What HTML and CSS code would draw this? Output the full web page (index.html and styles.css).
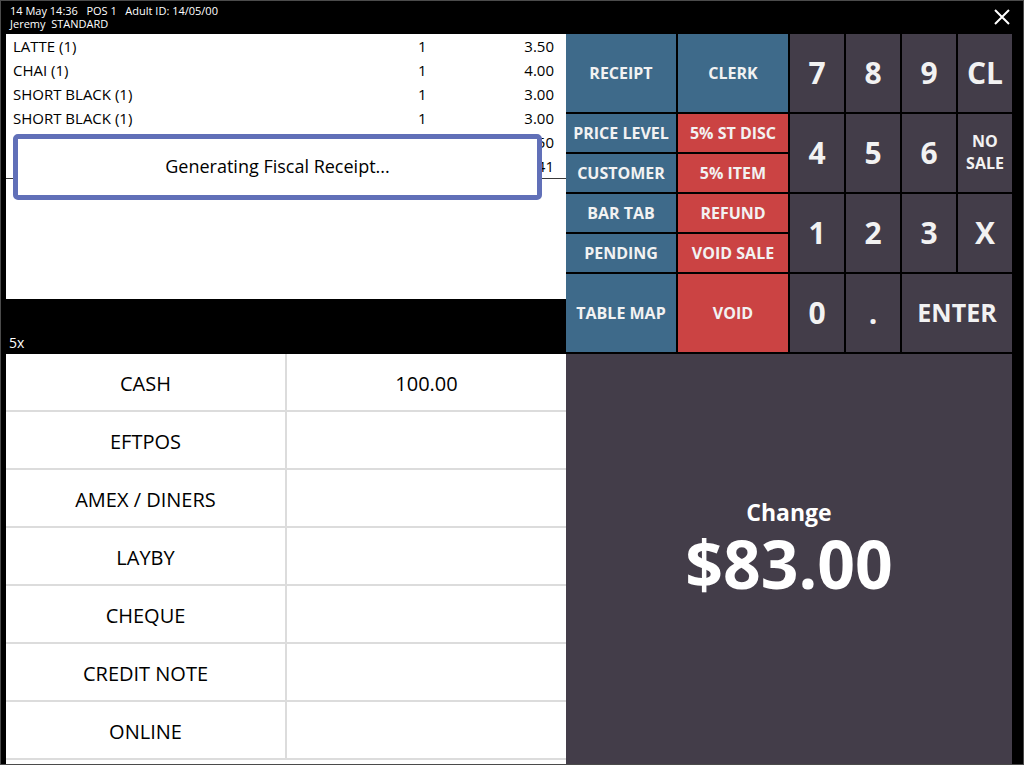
FILE: index.html
```html
<!DOCTYPE html>
<html lang="en">
<head>
    <meta charset="UTF-8">
    <meta name="viewport" content="width=device-width, initial-scale=1.0">
    <title>POS Sale</title>
    <link rel="stylesheet" href="styles.css">
</head>
<body>
    <div class="window">
        <header class="topbar">
            <div class="status">
                <div class="status-line">14 May 14:36   POS 1   Adult ID: 14/05/00</div>
                <div class="status-line">Jeremy  STANDARD</div>
            </div>
            <button class="close" aria-label="Close">
                <svg width="16" height="16" viewBox="0 0 16 16">
                    <path d="M1 1 L15 15 M15 1 L1 15" stroke="#fff" stroke-width="2" fill="none"/>
                </svg>
            </button>
        </header>

        <main class="main">
            <section class="left">
                <div class="sale">
                    <div class="sale-row"><span>LATTE (1)</span><span>1</span><span class="price">3.50</span></div>
                    <div class="sale-row"><span>CHAI (1)</span><span>1</span><span class="price">4.00</span></div>
                    <div class="sale-row"><span>SHORT BLACK (1)</span><span>1</span><span class="price">3.00</span></div>
                    <div class="sale-row"><span>SHORT BLACK (1)</span><span>1</span><span class="price">3.00</span></div>
                    <div class="sale-row"><span>LATTE (1)</span><span>1</span><span class="price">3.50</span></div>
                    <div class="sale-row"><span>GST</span><span></span><span class="price">1.41</span></div>
                    <div class="sale-rule"></div>

                    <div class="dialog">Generating Fiscal Receipt...</div>
                </div>

                <div class="band"><span>5x</span></div>

                <div class="tenders">
                    <div class="tender-grid">
                        <div class="tender">CASH</div><div class="tender">100.00</div>
                        <div class="tender">EFTPOS</div><div class="tender"></div>
                        <div class="tender">AMEX / DINERS</div><div class="tender"></div>
                        <div class="tender">LAYBY</div><div class="tender"></div>
                        <div class="tender">CHEQUE</div><div class="tender"></div>
                        <div class="tender">CREDIT NOTE</div><div class="tender"></div>
                        <div class="tender">ONLINE</div><div class="tender"></div>
                    </div>
                </div>
            </section>

            <section class="right">
                <div class="keys">
                    <button class="key blue">RECEIPT</button>
                    <button class="key blue">CLERK</button>
                    <button class="key num">7</button>
                    <button class="key num">8</button>
                    <button class="key num">9</button>
                    <button class="key num">CL</button>

                    <button class="key blue">PRICE LEVEL</button>
                    <button class="key red">5% ST DISC</button>
                    <button class="key num tall">4</button>
                    <button class="key num tall">5</button>
                    <button class="key num tall">6</button>
                    <button class="key num tall small">NO<br>SALE</button>

                    <button class="key blue">CUSTOMER</button>
                    <button class="key red">5% ITEM</button>

                    <button class="key blue">BAR TAB</button>
                    <button class="key red">REFUND</button>
                    <button class="key num tall">1</button>
                    <button class="key num tall">2</button>
                    <button class="key num tall">3</button>
                    <button class="key num tall">X</button>

                    <button class="key blue">PENDING</button>
                    <button class="key red">VOID SALE</button>

                    <button class="key blue">TABLE MAP</button>
                    <button class="key red">VOID</button>
                    <button class="key num">0</button>
                    <button class="key num">.</button>
                    <button class="key num wide">ENTER</button>
                </div>

                <div class="change">
                    <div class="change-label">Change</div>
                    <div class="change-amount">$83.00</div>
                </div>
            </section>
        </main>
    </div>
</body>
</html>
```

FILE: styles.css
```css
body {
    margin: 0;
    background-color: #000;
    font-family: "Open Sans", "Noto Sans", sans-serif;
}
.window {
    width: 1022px;
    height: 763px;
    border: 1px solid #4b4b4b;
    background-color: #000;
    display: flex;
    flex-direction: column;
}

/* top status bar */
.topbar {
    height: 33px;
    box-sizing: border-box;
    padding: 3px 0 0 9px;
    display: flex;
    justify-content: space-between;
    color: #fff;
    font-size: 11px;
    line-height: 13px;
}
.status-line {
    white-space: pre;
}
.close {
    margin: 5px 13px 0 0;
    padding: 0;
    width: 16px;
    height: 16px;
    background: none;
    border: none;
    cursor: pointer;
}
.close svg {
    display: block;
}

.main {
    display: flex;
    height: 730px;
    padding-left: 5px;
}
.left {
    width: 560px;
    display: flex;
    flex-direction: column;
}

/* sale list */
.sale {
    position: relative;
    height: 265px;
    background-color: #fff;
}
.sale-row {
    display: grid;
    grid-template-columns: 405px 1fr auto;
    height: 24px;
    line-height: 24px;
    padding: 0 12px 0 7px;
    font-size: 15px;
    color: #000;
}
.sale-rule {
    border-top: 1px solid #3a3a3a;
}
.dialog {
    position: absolute;
    left: 7px;
    top: 100px;
    width: 529px;
    height: 66px;
    box-sizing: border-box;
    border: 5px solid #6170b8;
    border-radius: 5px;
    background-color: #fff;
    display: flex;
    align-items: center;
    justify-content: center;
    padding-bottom: 3px;
    font-size: 18px;
    color: #000;
}

.band {
    height: 55px;
    box-sizing: border-box;
    display: flex;
    align-items: flex-end;
    padding: 0 0 2px 3px;
    color: #fff;
    font-size: 14px;
}

/* tender list */
.tenders {
    flex: 1;
    background-color: #fff;
}
.tender-grid {
    display: grid;
    grid-template-columns: 279px 279px;
    grid-auto-rows: 56px;
    gap: 2px;
    padding-bottom: 2px;
    background-color: #dcdcdc;
}
.tender {
    background-color: #fff;
    display: flex;
    align-items: center;
    justify-content: center;
    padding-top: 2px;
    font-size: 20px;
    color: #000;
}

/* keypad */
.right {
    width: 446px;
    display: flex;
    flex-direction: column;
    gap: 2px;
}
.keys {
    display: grid;
    grid-template-columns: 110px 110px repeat(4, 54px);
    grid-template-rows: 78px 38px 38px 38px 38px 78px;
    gap: 2px;
}
.key {
    border: none;
    padding: 0;
    margin: 0;
    display: flex;
    align-items: center;
    justify-content: center;
    text-align: center;
    font-family: inherit;
    font-weight: 700;
    font-size: 16px;
    color: #f2f2f2;
    cursor: pointer;
}
.key.blue {
    background-color: #3e6a8a;
}
.key.red {
    background-color: #cb4343;
}
.key.num {
    background-color: #433d49;
    font-size: 30px;
    padding-bottom: 2px;
}
.key.tall {
    grid-row: span 2;
}
.key.wide {
    grid-column: span 2;
    font-size: 25px;
}
.key.small {
    font-size: 16px;
    line-height: 22px;
}

/* change panel */
.change {
    flex: 1;
    background-color: #433d49;
    color: #fff;
    font-weight: 700;
    display: flex;
    flex-direction: column;
    align-items: center;
    justify-content: center;
    gap: 3px;
    padding-bottom: 25px;
}
.change-label {
    font-size: 23px;
    line-height: 30px;
}
.change-amount {
    font-size: 66px;
    line-height: 66px;
}
```
